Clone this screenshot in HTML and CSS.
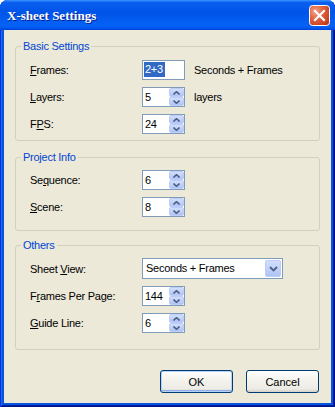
FILE: index.html
```html
<!DOCTYPE html>
<html lang="en">
<head>
    <meta charset="UTF-8">
    <title>X-sheet Settings</title>
    <link rel="stylesheet" href="styles.css">
</head>
<body>
    <div class="window">
        <div class="titlebar">
            <span class="title">X-sheet Settings</span>
            <span class="close">
                <svg width="21" height="21" viewBox="0 0 21 21">
                    <defs>
                        <radialGradient id="closeFill" cx="30%" cy="30%" r="85%">
                            <stop offset="0" stop-color="#F2A48A"/>
                            <stop offset="0.45" stop-color="#E2613F"/>
                            <stop offset="1" stop-color="#C0391B"/>
                        </radialGradient>
                    </defs>
                    <rect x="0.5" y="0.5" width="20" height="20" rx="3" fill="url(#closeFill)" stroke="#fff"/>
                    <path d="M6 6 L15 15 M15 6 L6 15" stroke="#fff" stroke-width="2.2" stroke-linecap="square"/>
                </svg>
            </span>
        </div>

        <div class="content">
            <fieldset class="group group-basic">
                <legend>Basic Settings</legend>
                <div class="row">
                    <span class="label"><u>F</u>rames:</span>
                    <div class="textbox"><span class="selected">2+3</span></div>
                    <span class="unit">Seconds + Frames</span>
                </div>
                <div class="row">
                    <span class="label"><u>L</u>ayers:</span>
                    <div class="spin">
                        <span class="value">5</span>
                        <span class="spin-btns">
                            <span class="spin-btn"><svg width="7" height="4" viewBox="0 0 7 4"><path d="M0.5 3.5 L3.5 0.7 L6.5 3.5" fill="none" stroke="#4D6185" stroke-width="1.6"/></svg></span>
                            <span class="spin-btn"><svg width="7" height="4" viewBox="0 0 7 4"><path d="M0.5 0.5 L3.5 3.3 L6.5 0.5" fill="none" stroke="#4D6185" stroke-width="1.6"/></svg></span>
                        </span>
                    </div>
                    <span class="unit">layers</span>
                </div>
                <div class="row">
                    <span class="label">F<u>P</u>S:</span>
                    <div class="spin">
                        <span class="value">24</span>
                        <span class="spin-btns">
                            <span class="spin-btn"><svg width="7" height="4" viewBox="0 0 7 4"><path d="M0.5 3.5 L3.5 0.7 L6.5 3.5" fill="none" stroke="#4D6185" stroke-width="1.6"/></svg></span>
                            <span class="spin-btn"><svg width="7" height="4" viewBox="0 0 7 4"><path d="M0.5 0.5 L3.5 3.3 L6.5 0.5" fill="none" stroke="#4D6185" stroke-width="1.6"/></svg></span>
                        </span>
                    </div>
                </div>
            </fieldset>

            <fieldset class="group group-project">
                <legend>Project Info</legend>
                <div class="row">
                    <span class="label">Se<u>q</u>uence:</span>
                    <div class="spin">
                        <span class="value">6</span>
                        <span class="spin-btns">
                            <span class="spin-btn"><svg width="7" height="4" viewBox="0 0 7 4"><path d="M0.5 3.5 L3.5 0.7 L6.5 3.5" fill="none" stroke="#4D6185" stroke-width="1.6"/></svg></span>
                            <span class="spin-btn"><svg width="7" height="4" viewBox="0 0 7 4"><path d="M0.5 0.5 L3.5 3.3 L6.5 0.5" fill="none" stroke="#4D6185" stroke-width="1.6"/></svg></span>
                        </span>
                    </div>
                </div>
                <div class="row">
                    <span class="label"><u>S</u>cene:</span>
                    <div class="spin">
                        <span class="value">8</span>
                        <span class="spin-btns">
                            <span class="spin-btn"><svg width="7" height="4" viewBox="0 0 7 4"><path d="M0.5 3.5 L3.5 0.7 L6.5 3.5" fill="none" stroke="#4D6185" stroke-width="1.6"/></svg></span>
                            <span class="spin-btn"><svg width="7" height="4" viewBox="0 0 7 4"><path d="M0.5 0.5 L3.5 3.3 L6.5 0.5" fill="none" stroke="#4D6185" stroke-width="1.6"/></svg></span>
                        </span>
                    </div>
                </div>
            </fieldset>

            <fieldset class="group group-others">
                <legend>Others</legend>
                <div class="row">
                    <span class="label">Sheet <u>V</u>iew:</span>
                    <div class="combo">
                        <span class="value">Seconds + Frames</span>
                        <span class="combo-btn"><svg width="9" height="6" viewBox="0 0 9 6"><path d="M1 1 L4.5 4.5 L8 1" fill="none" stroke="#4D6185" stroke-width="1.8"/></svg></span>
                    </div>
                </div>
                <div class="row">
                    <span class="label">F<u>r</u>ames Per Page:</span>
                    <div class="spin">
                        <span class="value">144</span>
                        <span class="spin-btns">
                            <span class="spin-btn"><svg width="7" height="4" viewBox="0 0 7 4"><path d="M0.5 3.5 L3.5 0.7 L6.5 3.5" fill="none" stroke="#4D6185" stroke-width="1.6"/></svg></span>
                            <span class="spin-btn"><svg width="7" height="4" viewBox="0 0 7 4"><path d="M0.5 0.5 L3.5 3.3 L6.5 0.5" fill="none" stroke="#4D6185" stroke-width="1.6"/></svg></span>
                        </span>
                    </div>
                </div>
                <div class="row">
                    <span class="label"><u>G</u>uide Line:</span>
                    <div class="spin">
                        <span class="value">6</span>
                        <span class="spin-btns">
                            <span class="spin-btn"><svg width="7" height="4" viewBox="0 0 7 4"><path d="M0.5 3.5 L3.5 0.7 L6.5 3.5" fill="none" stroke="#4D6185" stroke-width="1.6"/></svg></span>
                            <span class="spin-btn"><svg width="7" height="4" viewBox="0 0 7 4"><path d="M0.5 0.5 L3.5 3.3 L6.5 0.5" fill="none" stroke="#4D6185" stroke-width="1.6"/></svg></span>
                        </span>
                    </div>
                </div>
            </fieldset>

            <div class="actions">
                <button class="btn btn-default">OK</button>
                <button class="btn">Cancel</button>
            </div>
        </div>
    </div>
</body>
</html>
```

FILE: styles.css
```css
body {
    margin: 0;
    background-color: #fff;
    font-family: 'Liberation Sans', Arial, sans-serif;
    font-size: 11px;
    letter-spacing: -0.25px;
    color: #000;
}

.window {
    width: 335px;
    height: 407px;
    box-sizing: border-box;
    display: flex;
    flex-direction: column;
    background-color: #0855DD;
    border-radius: 8px 8px 0 0;
    box-shadow: inset 1px 0 #0831D9, inset -1px -1px #00138C,
                inset 2px 0 #166AEE, inset -2px -2px #001EA0;
    overflow: hidden;
}

.titlebar {
    height: 30px;
    flex-shrink: 0;
    display: flex;
    align-items: center;
    justify-content: space-between;
    padding: 0 5px 0 7px;
    background: linear-gradient(180deg, #3D95FF 0, #0A5FF0 8%, #0054E8 40%, #0562F5 85%, #0058EE 94%, #003DD7 100%);
}

.title {
    font-family: 'Liberation Serif', 'Times New Roman', serif;
    font-weight: bold;
    font-size: 13px;
    letter-spacing: 0;
    color: #fff;
    text-shadow: 1px 1px #0A1A8C;
    margin-top: 1px;
}

.close {
    display: flex;
    width: 21px;
    height: 21px;
}

.content {
    flex: 1;
    margin: 0 4px 4px;
    padding-top: 10px;
    background-color: #ECE9D8;
    display: flex;
    flex-direction: column;
}

.group {
    margin: 0 11px;
    padding: 7px 0 6px 5px;
    border: 1px solid #D0D0BF;
    border-radius: 3px;
    min-width: 0;
    display: flex;
    flex-direction: column;
    gap: 7px;
}

.group legend {
    padding: 0 2px;
    line-height: 13px;
    color: #0046D5;
}

.group-project {
    margin-top: 10px;
    padding-top: 6px;
    padding-bottom: 13px;
}

.group-others {
    margin-top: 8px;
    padding-top: 6px;
    padding-bottom: 16px;
}

.row {
    display: flex;
    align-items: center;
    padding-left: 9px;
}

.label {
    width: 112px;
    flex-shrink: 0;
}

.unit {
    margin-left: 9px;
}

.textbox, .spin, .combo {
    box-sizing: border-box;
    height: 20px;
    border: 1px solid #7F9DB9;
    background-color: #fff;
    display: flex;
}

.textbox {
    width: 43px;
    padding: 1px 0 0 1px;
}

.selected {
    align-self: flex-start;
    background-color: #316AC5;
    color: #fff;
    line-height: 15px;
    padding: 0 2px 0 1px;
}

.spin {
    width: 43px;
}

.value {
    flex: 1;
    padding-left: 2px;
    line-height: 18px;
}

.spin-btns {
    width: 15px;
    display: flex;
    flex-direction: column;
}

.spin-btn {
    flex: 1;
    display: flex;
    align-items: center;
    justify-content: center;
    box-sizing: border-box;
    border: 1px solid #BBCDF8;
    border-radius: 2px;
    background: linear-gradient(180deg, #D2DEFC, #AFC4F4);
}

.combo {
    width: 141px;
    height: 21px;
}

.combo .value {
    padding-left: 3px;
    line-height: 19px;
}

.combo-btn {
    width: 16px;
    margin: 1px 1px 1px 0;
    display: flex;
    align-items: center;
    justify-content: center;
    box-sizing: border-box;
    border: 1px solid #BBCDF8;
    border-radius: 2px;
    background: linear-gradient(180deg, #D2DEFC, #AFC4F4);
}

.actions {
    display: flex;
    justify-content: flex-end;
    gap: 13px;
    margin-top: 20px;
    padding-right: 12px;
}

.btn {
    width: 73px;
    height: 23px;
    padding: 0;
    border: 1px solid #003C74;
    border-radius: 3px;
    background: linear-gradient(180deg, #fff 0, #F4F3EE 40%, #ECEBE6 85%, #D6D0C5 100%);
    font-family: 'Liberation Sans', Arial, sans-serif;
    font-size: 11px;
    color: #000;
}

.btn-default {
    box-shadow: inset 0 0 0 1px #B9D0F5, inset 0 -1px 0 1px #8FB0E8;
}
```
